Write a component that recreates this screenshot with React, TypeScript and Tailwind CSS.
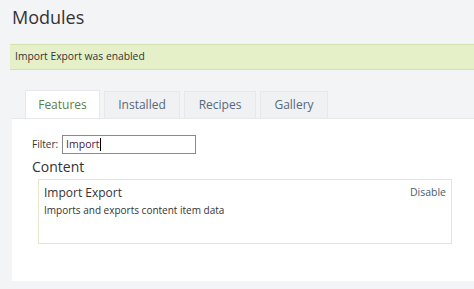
import React from "react";

export default function App() {
  const font = { fontFamily: '"Open Sans", "Noto Sans", sans-serif' };
  return (
    <div className="w-[474px] h-[289px] bg-[#f3f4f6] overflow-hidden text-[#333]" style={font}>
      <div className="pl-[12px] pt-[4px] h-[44px]">
        <h1 className="text-[18px] leading-[26px] text-[#333]">Modules</h1>
      </div>
      <div className="ml-[10px] h-[26px] bg-[#e6f0c8] border-y border-[#d4e0ae] flex items-center pl-[5px] text-[10.3px] text-[#333]">
        Import Export was enabled
      </div>
      <div className="ml-[12px] mt-[20px]">
        <div className="flex pl-[13px] gap-[4px] h-[28px] items-end">
          <div className="w-[75px] h-[28px] bg-white border border-b-0 border-[#e6e8eb] flex items-center justify-center text-[12px] text-[#5a8048]">
            Features
          </div>
          <div className="w-[76px] h-[27px] bg-[#f0f1f3] border border-b-0 border-[#e6e8eb] flex items-center justify-center text-[12px] text-[#56687a]">
            Installed
          </div>
          <div className="w-[72px] h-[27px] bg-[#f0f1f3] border border-b-0 border-[#e6e8eb] flex items-center justify-center text-[12px] text-[#56687a]">
            Recipes
          </div>
          <div className="w-[68px] h-[27px] bg-[#f0f1f3] border border-b-0 border-[#e6e8eb] flex items-center justify-center text-[12px] text-[#56687a]">
            Gallery
          </div>
        </div>
        <div className="bg-white h-[163px] border-t border-[#e6e8eb] pl-[20px] pt-[16px]">
          <div className="flex items-center h-[19px]">
            <span className="text-[10px] text-[#333] mr-[4px]">Filter:</span>
            <div className="w-[134px] h-[19px] border border-[#8a8a8a] flex items-center pl-[3px] text-[10.5px] text-[#4a2040]">
              Import<span className="inline-block w-px h-[13px] bg-black"></span>
            </div>
          </div>
          <div className="text-[14px] leading-[20px] mt-[3px] text-[#333]">Content</div>
          <div className="ml-[6px] mt-[2px] w-[414px] h-[65px] border border-[#e6e6cc] px-[5px] pt-[4px] relative">
            <div className="text-[12px] leading-[18px] text-[#333]">Import Export</div>
            <div className="text-[10px] leading-[16px] text-[#333]">Imports and exports content item data</div>
            <div className="absolute right-[5px] top-[5px] text-[10.5px] text-[#4a5d6e]">Disable</div>
          </div>
        </div>
      </div>
    </div>
  );
}
